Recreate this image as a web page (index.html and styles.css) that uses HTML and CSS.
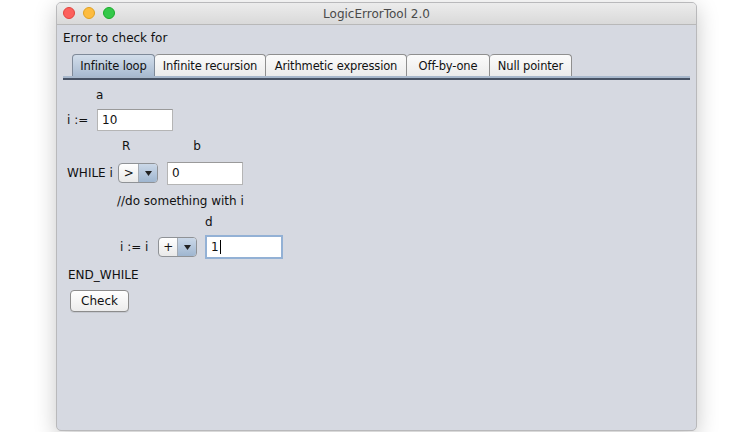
FILE: index.html
```html
<!DOCTYPE html>
<html>
<head>
<meta charset="utf-8">
<link rel="stylesheet" href="styles.css">
</head>
<body>
<div class="window">
  <div class="titlebar">
    <div class="lights">
      <span class="light red"></span>
      <span class="light yellow"></span>
      <span class="light green"></span>
    </div>
    <div class="title">LogicErrorTool 2.0</div>
  </div>
  <div class="content">
    <div class="heading">Error to check for</div>
    <div class="tabs">
      <div class="tab selected t1">Infinite loop</div>
      <div class="tab t2">Infinite recursion</div>
      <div class="tab t3">Arithmetic expression</div>
      <div class="tab t4">Off-by-one</div>
      <div class="tab t5">Null pointer</div>
    </div>
    <div class="tabline"></div>
    <div class="form">
      <div class="row r-a"><span class="lbl-a">a</span></div>
      <div class="row r-assign">
        <span class="lbl-i">i :=</span>
        <span class="field f-a">10</span>
      </div>
      <div class="row r-rb"><span class="lbl-r">R</span><span class="lbl-b">b</span></div>
      <div class="row r-while">
        <span class="lbl-while">WHILE i</span>
        <span class="combo c-r"><span class="cval">&gt;</span><span class="carrow"><svg width="7" height="5" viewBox="0 0 7 5"><path d="M0 0h7L3.5 5z" fill="#222"/></svg></span></span>
        <span class="field f-b">0</span>
      </div>
      <div class="row r-do"><span class="lbl-do">//do something with i</span></div>
      <div class="row r-d"><span class="lbl-d">d</span></div>
      <div class="row r-inc">
        <span class="lbl-ii">i := i</span>
        <span class="combo c-op"><span class="cval">+</span><span class="carrow"><svg width="7" height="5" viewBox="0 0 7 5"><path d="M0 0h7L3.5 5z" fill="#222"/></svg></span></span>
        <span class="field f-d focused">1<span class="caret"></span></span>
      </div>
      <div class="row r-end"><span class="lbl-end">END_WHILE</span></div>
      <div class="row r-btn"><button class="btn">Check</button></div>
    </div>
  </div>
</div>
</body>
</html>
```

FILE: styles.css
```css
html, body {
  margin: 0;
  padding: 0;
  background: #ffffff;
  height: 432px;
  overflow: hidden;
}
body {
  font-family: "DejaVu Sans", "Noto Sans", sans-serif;
  font-size: 12px;
  color: #111;
}
.window {
  margin-left: 56px;
  margin-top: 2px;
  width: 641px;
  height: 429px;
  border: 1px solid #b9b9bb;
  border-radius: 5px;
  background: #d6d9e1;
  box-shadow: 0 6px 22px rgba(0,0,0,0.22);
  overflow: hidden;
  box-sizing: border-box;
}
.titlebar {
  position: relative;
  height: 21px;
  background: linear-gradient(#ececec, #d9d9d9);
  border-bottom: 1px solid #b8b8b8;
  display: flex;
  align-items: center;
  justify-content: center;
}
.lights {
  position: absolute;
  left: 6px;
  top: 4px;
  display: flex;
  gap: 8px;
}
.light {
  width: 12px;
  height: 12px;
  border-radius: 50%;
  box-sizing: border-box;
}
.red { background: #fc605c; border: 1px solid #e0443e; }
.yellow { background: #fdbc40; border: 1px solid #dea123; }
.green { background: #34c84a; border: 1px solid #1aab29; }
.title {
  font-family: "DejaVu Sans", sans-serif;
  font-size: 12px;
  color: #4a4a4a;
}
.content {
  padding: 0 4px 0 6px;
}
.heading {
  margin-top: 5px;
  height: 16px;
  line-height: 16px;
}
.tabs {
  margin-top: 8px;
  padding-left: 9px;
  display: flex;
  height: 22px;
}
.tab {
  height: 22px;
  box-sizing: border-box;
  padding: 0;
  text-align: center;
  line-height: 22px;
  font-size: 11.5px;
  border: 1px solid #8f8f8f;
  border-bottom: none;
  border-left: none;
  border-radius: 4px 4px 0 0;
  background: linear-gradient(#fbfbfb, #ececec);
  white-space: nowrap;
  letter-spacing: -0.15px;
}
.tab:first-child { border-left: 1px solid #8f8f8f; }
.t1 { width: 83px; }
.t2 { width: 111px; }
.t3 { width: 141px; }
.t4 { width: 83px; }
.t5 { width: 82px; }
.tab.selected {
  background: linear-gradient(#d3deeb, #a9bbd1);
  border-color: #7f8a99;
}
.tabline {
  height: 2px;
  background: #a8b8cc;
  border-bottom: 2px solid #485365;
  margin-right: 2px;
}
.row {
  display: flex;
  align-items: center;
}
.r-a { height: 20px; margin-top: 5px; }
.lbl-a { margin-left: 33px; }
.r-assign { height: 24px; margin-top: 3px; }
.lbl-i { margin-left: 4px; width: 30px; }
.field {
  box-sizing: border-box;
  height: 22px;
  background: #fff;
  border: 1px solid #b5b5b5;
  border-top-color: #9a9a9a;
  padding-left: 4px;
  line-height: 20px;
  display: inline-flex;
  align-items: center;
}
.f-a { width: 76px; }
.r-rb { height: 20px; margin-top: 4px; }
.lbl-r { margin-left: 59px; }
.lbl-b { margin-left: 63px; }
.r-while { height: 24px; margin-top: 5px; }
.lbl-while { margin-left: 4px; width: 51px; }
.combo {
  box-sizing: border-box;
  height: 20px;
  border: 1px solid #8f9296;
  border-radius: 4px;
  display: inline-flex;
  overflow: hidden;
  background: linear-gradient(#ffffff, #e9e9e9);
}
.cval {
  width: 20px;
  text-align: center;
  line-height: 18px;
  border-right: 1px solid #a4abb4;
}
.carrow {
  width: 18px;
  background: linear-gradient(#cbd8e8, #9fb6d0);
  display: flex;
  align-items: center;
  justify-content: center;
}
.c-r { width: 40px; }
.f-b { width: 76px; margin-left: 9px; height: 23px; }
.r-do { height: 20px; margin-top: 6px; }
.lbl-do { margin-left: 54px; }
.r-d { height: 20px; margin-top: 1px; }
.lbl-d { margin-left: 142px; }
.r-inc { height: 26px; margin-top: 2px; }
.lbl-ii { margin-left: 57px; width: 38px; }
.c-op { width: 39px; }
.c-op .cval { width: 19px; }
.f-d {
  width: 78px;
  height: 24px;
  margin-left: 8px;
  border: 2px solid #93b1d5;
  padding-left: 4px;
}
.caret {
  display: inline-block;
  width: 1px;
  height: 14px;
  background: #000;
  margin-left: 1px;
}
.r-end { height: 20px; margin-top: 5px; }
.lbl-end { margin-left: 5px; }
.r-btn { height: 24px; margin-top: 4px; }
.btn {
  margin-left: 7px;
  width: 59px;
  height: 22px;
  font-family: "DejaVu Sans", sans-serif;
  font-size: 12px;
  color: #111;
  border: 1px solid #8c8c8c;
  border-radius: 4px;
  background: linear-gradient(#ffffff, #ececec);
  padding: 0;
  box-shadow: 0 1px 0 rgba(0,0,0,0.08);
}
```
